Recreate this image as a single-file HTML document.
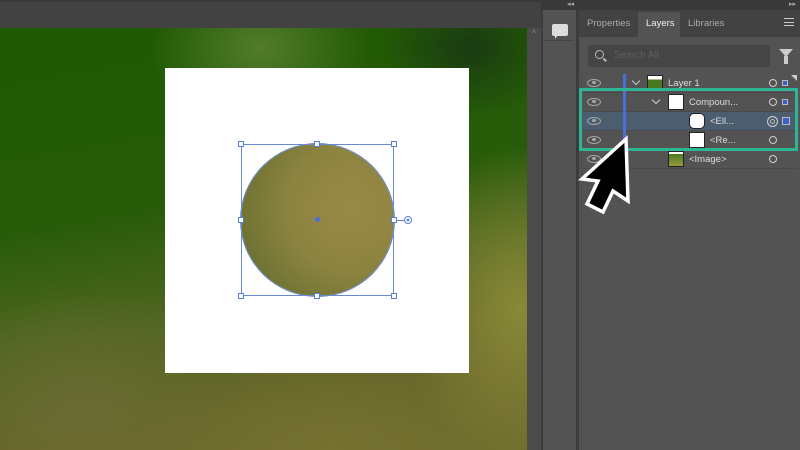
<!DOCTYPE html>
<html><head><style>
*{margin:0;padding:0;box-sizing:border-box}
body{width:800px;height:450px;overflow:hidden;background:#535353;position:relative;font-family:"Liberation Sans",sans-serif}
.a{position:absolute}
.row{position:absolute;left:583px;width:214px;height:19px;border-bottom:1px solid #4a4a4a}
.eye{position:absolute;left:4px;top:5px;width:14px;height:8px;border:1.5px solid #a8a8a8;border-radius:50%}
.eye:after{content:"";position:absolute;left:3.5px;top:1px;width:4px;height:3px;background:#a8a8a8;border-radius:50%}
.t{position:absolute;font-size:9.5px;color:#ddd;top:4px}
.o{position:absolute;left:186px;top:5px;width:8px;height:8px;border:1.2px solid #cfcfcf;border-radius:50%}
.sq{position:absolute;left:199px;top:6px;width:6px;height:6px;border:1px solid #bbb;background:#3b5fd1}
.th{position:absolute;width:16px;height:16px;background:#fff;border:1px solid #222;top:1px}
.chev{position:absolute;top:5px;width:6px;height:6px;border-right:1.5px solid #ccc;border-bottom:1.5px solid #ccc;transform:rotate(45deg)}
.h{position:absolute;width:6px;height:6px;background:#fff;border:1px solid #5a7fd0}
</style></head><body>
<div class="a" style="left:0;top:0;width:541px;height:28px;background:#424242;border-top:2px solid #3a3a3a"></div>
<div class="a" style="left:0;top:28px;width:527px;height:422px;background:
radial-gradient(ellipse 110px 80px at 260px 20px,rgba(90,130,50,.85),transparent),
radial-gradient(ellipse 90px 70px at 470px 20px,rgba(25,55,20,.9),transparent),
radial-gradient(ellipse 120px 160px at 520px 280px,rgba(150,145,60,.8),transparent),
radial-gradient(ellipse 200px 100px at 330px 420px,rgba(120,115,50,.8),transparent),
radial-gradient(ellipse 150px 120px at 80px 380px,rgba(110,110,55,.7),transparent),
linear-gradient(170deg,#205a03 0%,#275c08 40%,#4f6520 62%,#66662a 82%,#6e6c2c 100%)"></div>
<div class="a" style="left:527px;top:28px;width:14px;height:422px;background:#4b4b4b;color:#888;font-size:9px;text-align:center">^</div>
<div class="a" style="left:541px;top:0;width:259px;height:10px;background:#393939;color:#aaa;font-size:7px"><span class="a" style="left:26px;top:0">◂◂</span><span class="a" style="left:248px;top:0">▸▸</span></div>
<div class="a" style="left:541px;top:10px;width:38px;height:440px;background:#535353;border-left:2px solid #3c3c3c;border-right:3px solid #3c3c3c"></div>
<div class="a" style="left:543px;top:40px;width:31px;height:1px;background:#444"></div>
<div class="a" style="left:552px;top:24px;width:16px;height:12px;background:#ddd;border-radius:2px"></div>
<div class="a" style="left:555px;top:35px;width:0;height:0;border-left:3px solid #ddd;border-bottom:4px solid transparent"></div>
<div class="a" style="left:579px;top:10px;width:221px;height:27px;background:#424242"></div>
<div class="a" style="left:638px;top:12px;width:42px;height:25px;background:#535353"></div>
<div class="a" style="left:587px;top:18px;font-size:9.5px;color:#aaa">Properties</div>
<div class="a" style="left:646px;top:18px;font-size:9.5px;color:#eee">Layers</div>
<div class="a" style="left:688px;top:18px;font-size:9.5px;color:#aaa">Libraries</div>
<div class="a" style="left:784px;top:18px;width:10px;height:8px;border-top:1.5px solid #ccc;border-bottom:1.5px solid #ccc"></div>
<div class="a" style="left:784px;top:21.5px;width:10px;height:1.5px;background:#ccc"></div>
<div class="a" style="left:588px;top:45px;width:182px;height:22px;background:#454545;border-radius:2px"></div>
<div class="a" style="left:595px;top:50px;width:9px;height:9px;border:1.5px solid #bbb;border-radius:50%"></div>
<div class="a" style="left:603px;top:59px;width:4px;height:1.5px;background:#bbb;transform:rotate(45deg)"></div>
<div class="a" style="left:614px;top:50px;font-size:10px;color:#5e5e5e">Search All</div>
<div class="a" style="left:779px;top:49px;width:0;height:0;border-left:7px solid transparent;border-right:7px solid transparent;border-top:8px solid #ccc"></div>
<div class="a" style="left:784px;top:56px;width:4px;height:8px;background:#ccc"></div>
<div class="a" style="left:581px;top:73px;width:1px;height:377px;background:#4a4a4a"></div>

<div class="row" style="top:74px"><div class="eye"></div><div class="chev" style="left:50px;top:4px"></div><div class="th" style="left:64px;background:linear-gradient(#fff 25%,#4a7a20 25%);"></div><div class="t" style="left:85px">Layer 1</div><div class="o"></div><div class="sq"></div></div>
<div class="row" style="top:93px"><div class="eye"></div><div class="chev" style="left:70px;top:4px"></div><div class="th" style="left:85px"></div><div class="t" style="left:106px">Compoun...</div><div class="o"></div><div class="sq"></div></div>
<div class="row" style="top:112px;background:#4d5d70"><div class="eye"></div><div class="th" style="left:106px;border-radius:5px"></div><div class="t" style="left:127px">&lt;Ell...</div><div class="o" style="left:184px;top:4px;width:11px;height:11px;box-shadow:inset 0 0 0 2px #4d5d70,inset 0 0 0 3px #bbb"></div><div class="sq" style="width:8px;height:8px;top:5px"></div></div>
<div class="row" style="top:131px"><div class="eye"></div><div class="th" style="left:106px"></div><div class="t" style="left:127px">&lt;Re...</div><div class="o"></div></div>
<div class="row" style="top:150px"><div class="eye"></div><div class="th" style="left:85px;background:linear-gradient(#fff 15%,#4a7a20 15%,#9a9a40)"></div><div class="t" style="left:106px">&lt;Image&gt;</div><div class="o"></div></div>
<div class="a" style="left:623px;top:74px;width:2.5px;height:76px;background:#4a70d8"></div>
<div class="a" style="left:791px;top:75px;width:0;height:0;border-left:6px solid transparent;border-top:6px solid #ccc"></div>
<div class="a" style="left:579px;top:88px;width:219px;height:63px;border:3px solid #2db596"></div>
<svg class="a" style="left:0;top:0" width="800" height="450"><polygon points="626,139 582,179 598,181 587,204 603,212 613,191 628,201" fill="#000" stroke="#fff" stroke-width="3.5" stroke-linejoin="miter"/></svg>

<div class="a" style="left:165px;top:68px;width:304px;height:305px;background:#fff"></div>
<div class="a" style="left:241px;top:144px;width:153px;height:152px;border-radius:50%;background:radial-gradient(circle at 72% 42%,#998a45,#8c8340 45%,#727534 75%,#52682a 100%);box-shadow:0 0 0 1px #5a7fd0"></div>
<div class="a" style="left:241px;top:144px;width:153px;height:152px;border:1px solid #6a8ad0"></div>
<div class="h" style="left:238px;top:141px"></div><div class="h" style="left:314px;top:141px"></div><div class="h" style="left:391px;top:141px"></div>
<div class="h" style="left:238px;top:217px"></div><div class="h" style="left:391px;top:217px"></div>
<div class="h" style="left:238px;top:293px"></div><div class="h" style="left:314px;top:293px"></div><div class="h" style="left:391px;top:293px"></div>
<div class="a" style="left:315px;top:217px;width:5px;height:5px;border-radius:50%;background:#4a70e0"></div>
<div class="a" style="left:397px;top:220px;width:8px;height:1px;background:#5a7fd0"></div>
<div class="a" style="left:404px;top:216px;width:8px;height:8px;border:1px solid #5a7fd0;border-radius:50%;background:radial-gradient(#5a7fd0 30%,#fff 35%)"></div>
</body></html>
